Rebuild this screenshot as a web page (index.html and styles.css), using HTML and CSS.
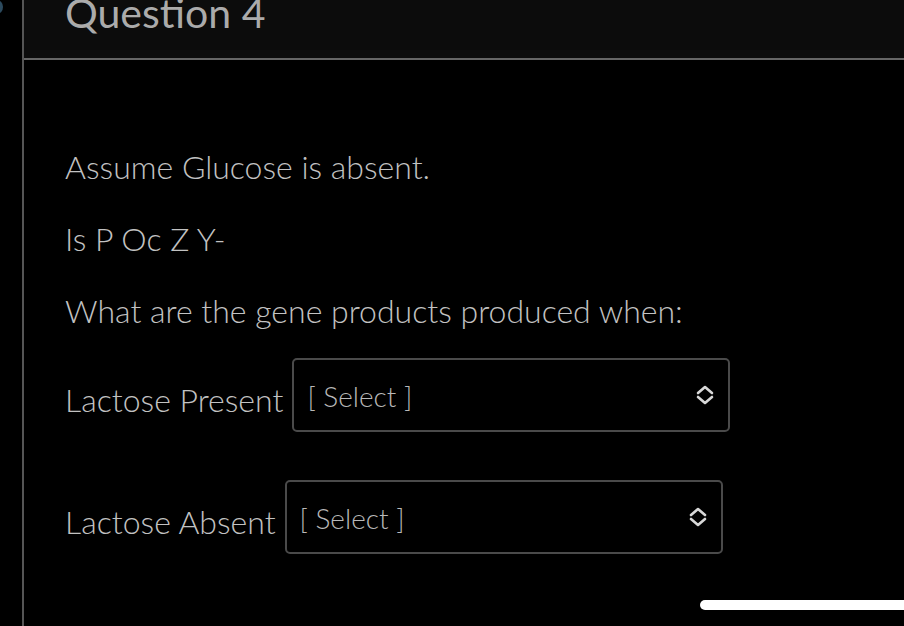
FILE: index.html
```html
<!DOCTYPE html>
<html>
<head>
<meta charset="utf-8">
<link rel="stylesheet" href="styles.css">
</head>
<body>
<div class="page">
  <div class="gutter"><span class="dot"></span></div>
  <div class="main">
    <div class="header"><h2 class="title">Question 4</h2></div>
    <div class="content">
      <p class="para">Assume Glucose is absent.</p>
      <p class="para">Is P Oc Z Y-</p>
      <p class="para para-last">What are the gene products produced when:</p>
      <div class="row">
        <span class="label">Lactose Present</span>
        <div class="select"><span class="select-text">[ Select ]</span>
          <svg class="chev" width="18" height="20" viewBox="0 0 18 20"><path d="M2 8 L9 2 L16 8 M2 12 L9 18 L16 12" fill="none" stroke="#d8d8d8" stroke-width="2.6" stroke-linecap="round" stroke-linejoin="round"/></svg>
        </div>
      </div>
      <div class="row row-second">
        <span class="label">Lactose Absent</span>
        <div class="select"><span class="select-text">[ Select ]</span>
          <svg class="chev" width="18" height="20" viewBox="0 0 18 20"><path d="M2 8 L9 2 L16 8 M2 12 L9 18 L16 12" fill="none" stroke="#d8d8d8" stroke-width="2.6" stroke-linecap="round" stroke-linejoin="round"/></svg>
        </div>
      </div>
    </div>
  </div>
</div>
<div class="homebar"></div>
</body>
</html>
```
FILE: styles.css
```css
html, body {
  margin: 0;
  padding: 0;
  background: #000;
  height: 100%;
  overflow: hidden;
}
body {
  font-family: "Lato", "Liberation Sans", sans-serif;
  color: #c4c4c4;
  position: relative;
}
.page {
  display: flex;
  height: 626px;
}
.gutter {
  width: 22px;
  flex: none;
  position: relative;
}
.dot {
  position: absolute;
  left: -9px;
  top: 0;
  width: 12px;
  height: 14px;
  border-radius: 50%;
  background: #2c4a5e;
}
.main {
  flex: 1;
  border-left: 2px solid #555;
}
.header {
  height: 58px;
  background: #0c0c0c;
  border-bottom: 2px solid #666;
  padding-left: 41px;
  overflow: hidden;
}
.title {
  margin: 0;
  margin-top: -14px;
  font-size: 41px;
  font-weight: 400;
  color: #ababab;
  line-height: 54px;
}
.content {
  display: flex;
  flex-direction: column;
  align-items: flex-start;
  padding: 86px 0 0 41px;
}
.para {
  margin: 0 0 30px;
  font-size: 32px;
  font-weight: 300;
  line-height: 42px;
  color: #c2c2c2;
}
.para-last {
  margin-bottom: 26px;
}
.row {
  display: flex;
  align-items: flex-end;
  gap: 9px;
}
.row-second {
  margin-top: 48px;
}
.label {
  font-size: 32px;
  font-weight: 300;
  line-height: 42px;
  margin-bottom: 11px;
  color: #c2c2c2;
}
.select {
  width: 438px;
  height: 74px;
  box-sizing: border-box;
  border: 2px solid #4a4a4a;
  border-radius: 5px;
  display: flex;
  align-items: center;
  justify-content: space-between;
  padding: 0 14px 0 13px;
}
.select-text {
  font-size: 28px;
  font-weight: 300;
  color: #b8b8b8;
  margin-top: 2px;
}
.chev {
  display: block;
}
.homebar {
  position: absolute;
  left: 700px;
  top: 600px;
  width: 220px;
  height: 10px;
  border-radius: 5px;
  background: #fff;
}
```
